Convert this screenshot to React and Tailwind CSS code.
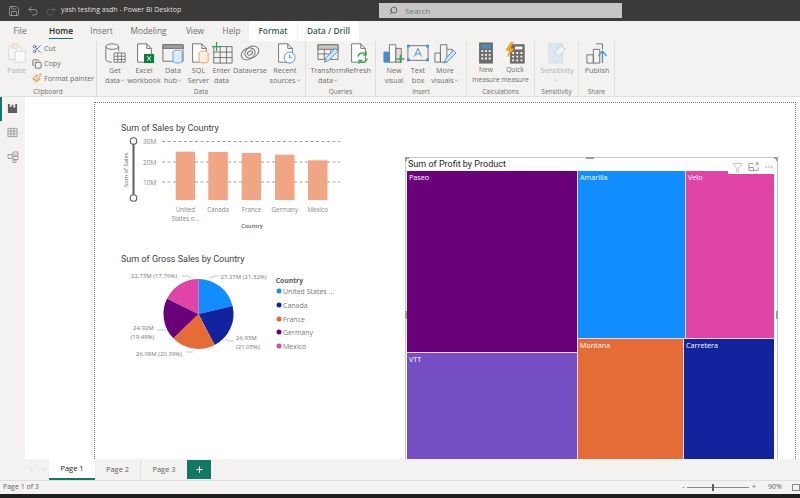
import { Copy, MoreHorizontal, Filter, Paintbrush, Scissors, Search, Save, Undo2, Redo2, ChevronDown, ChevronLeft, ChevronRight, Plus } from 'lucide-react';

const ui = { fontFamily: '"Open Sans", "Noto Sans", sans-serif' };
const din = { fontFamily: 'Roboto, sans-serif' };

const Svg = ({ children }) => (
  <svg width="22" height="22" viewBox="0 0 24 24" fill="none" stroke="#6f6d6b" strokeWidth="1">{children}</svg>
);

const Doc = () => <path d="M5 2h10l5 5v15H5z M15 2v5h5" fill="#fff" />;

const icons = {
  paste: (
    <Svg>
      <path d="M3 5h14v14H3z" stroke="#d8d6d3" fill="#f8f7f6" />
      <path d="M7 2h6v5H7z" stroke="#e8d5c0" fill="#f3e8dc" />
      <path d="M10 10h11v12H10z" stroke="#d8d6d3" fill="#fbfaf9" />
    </Svg>
  ),
  get: (
    <Svg>
      <ellipse cx="9" cy="5" rx="7" ry="3" />
      <path d="M2 5v14c0 2 4 3 7 3 M16 5v5" />
      <path d="M11 12h12v10H11z M11 15.500h12 M11 19h12 M15 12v10 M19 12v10" fill="#fff" />
    </Svg>
  ),
  excel: (
    <Svg>
      <Doc />
      <rect x="12" y="13" width="11" height="10" fill="#107c41" stroke="none" />
      <path d="M15.500 15.500l4 5 M19.500 15.500l-4 5" stroke="#fff" />
    </Svg>
  ),
  hub: (
    <Svg>
      <path d="M1 3h22v18H1z" />
      <path d="M1 3h22v4H1z" fill="#a19f9d" />
      <ellipse cx="17" cy="11" rx="5" ry="2" fill="#fff" stroke="#4f9bd9" />
      <path d="M12 11v10c0 2.500 10 2.500 10 0V11" fill="#dcebf8" stroke="#4f9bd9" />
    </Svg>
  ),
  sql: (
    <Svg>
      <Doc />
      <ellipse cx="17" cy="12" rx="5" ry="2" fill="#fff" stroke="#e3a35a" />
      <path d="M12 12v9c0 2.500 10 2.500 10 0v-9" fill="#fbeedd" stroke="#e3a35a" />
    </Svg>
  ),
  enter: (
    <Svg>
      <path d="M3 5h20v18H3z M3 11h20 M3 17h20 M10 5v18 M17 5v18" />
      <path d="M6 0v10 M1 5h10" stroke="#2f9e5b" strokeWidth="1.300" />
    </Svg>
  ),
  dataverse: (
    <Svg>
      <ellipse cx="10" cy="13" rx="8" ry="6" transform="rotate(-30 10 13)" />
      <ellipse cx="14" cy="11" rx="8" ry="6" transform="rotate(-30 14 11)" />
      <ellipse cx="12" cy="12" rx="3" ry="2" transform="rotate(-30 12 12)" />
    </Svg>
  ),
  recent: (
    <Svg>
      <Doc />
      <circle cx="17" cy="17" r="6" fill="#fff" stroke="#3f8fd2" />
      <path d="M17 13.500V17h3" stroke="#3f8fd2" />
    </Svg>
  ),
  transform: (
    <Svg>
      <path d="M1 3h22v16H1z M1 13h16 M8 3v16 M15 3v16" />
      <path d="M1 3h22v5H1z" fill="#c8c6c4" />
      <path d="M8 22l2-5 10-10 3 3-10 10z" fill="#cfe4f7" stroke="#3f8fd2" />
    </Svg>
  ),
  refresh: (
    <Svg>
      <Doc />
      <path d="M12 16a5 5 0 0 1 9-2 M22 18a5 5 0 0 1-9 2" stroke="#3ba55d" strokeWidth="1.500" />
      <path d="M21 10v4h-4 M13 24v-4h4" stroke="#3ba55d" strokeWidth="1.200" />
    </Svg>
  ),
  newVisual: (
    <Svg>
      <path d="M1 11h6v11H1z" fill="#3f8fd2" stroke="#3f8fd2" />
      <path d="M7 3h7v19H7z" fill="#fff" />
      <path d="M14 7h6v15h-6z" fill="#e1dfdd" />
      <path d="M19 14v9 M14.500 18.500h9" stroke="#3ba55d" strokeWidth="1.500" />
    </Svg>
  ),
  textBox: (
    <Svg>
      <path d="M1 4h22v16H1z" />
      <path d="M8 16l4-9 4 9 M9.500 13h5" stroke="#3f8fd2" />
      <path d="M0 3h3v3H0z M21 3h3v3h-3z M0 18h3v3H0z M21 18h3v3h-3z" fill="#3f8fd2" stroke="none" />
    </Svg>
  ),
  moreVisuals: (
    <Svg>
      <path d="M1 12h6v10H1z M7 3h7v19H7z M14 8h6v8" />
      <path d="M11 23l2-5 8-9 3 3-9 9z" fill="#cfe4f7" stroke="#3f8fd2" />
    </Svg>
  ),
  measure: (
    <Svg>
      <rect x="5" y="1" width="14" height="22" fill="#6f6d6b" />
      <rect x="7" y="3" width="10" height="4" fill="#3f8fd2" stroke="none" />
      <path d="M7 10h2 M11 10h2 M15 10h2 M7 14h2 M11 14h2 M15 14h2 M7 18h2 M11 18h2 M15 18h2" stroke="#fff" strokeWidth="2" />
    </Svg>
  ),
  quick: (
    <Svg>
      <rect x="7" y="3" width="15" height="20" fill="#6f6d6b" />
      <rect x="12" y="5" width="8" height="3" fill="#fff" stroke="none" />
      <path d="M9 12h2 M13.500 12h2 M18 12h2 M9 16h2 M13.500 16h2 M18 16h2 M9 20h2 M13.500 20h2 M18 20h2" stroke="#fff" strokeWidth="2" />
      <path d="M8 0L2 9h4l-2 7 7-9H7l3-7z" fill="#f2a71b" stroke="#e08a00" strokeWidth="0.6" />
    </Svg>
  ),
  sensitivity: (
    <Svg>
      <path d="M3 2h15v21H3z" fill="#dbe8f3" stroke="#d5dee6" />
      <path d="M9 12l7-8 5 4-7 8z" fill="#eef3f7" stroke="#c8c6c4" />
    </Svg>
  ),
  publish: (
    <Svg>
      <path d="M1 14h7v9H1z M8 8h7v15H8z M11 2h7v6" />
      <path d="M18 23V11 M13.500 15l4.500-5 4.500 5" stroke="#3f8fd2" strokeWidth="1.300" />
    </Svg>
  ),
};

const Btn = ({ w, icon, lines, arrow, dim, tight }) => (
  <div className={`${w} flex flex-col items-center shrink-0 ${dim ? 'text-[#b3b0ad]' : 'text-[#6f6d6b]'}`}>
    <div className="h-[25px] flex items-end">{icons[icon]}</div>
    <div className={`${tight ? 'text-[6.7px]' : 'text-[7.2px]'} leading-[10px] text-center whitespace-nowrap mt-px`}>
      <div>{lines[0]}</div>
      <div className="flex items-center justify-center h-[10px]">
        {lines[1]}
        {arrow && <ChevronDown size={5} strokeWidth={2.5} />}
      </div>
    </div>
  </div>
);

const Group = ({ w, pl, label, children }) => (
  <div className={`${w} shrink-0 flex flex-col h-full border-r border-[#e1dfdd]`}>
    <div className={`flex flex-1 min-h-0 ${pl}`}>{children}</div>
    <div className="text-[6.5px] leading-[13px] text-[#6f6d6b] text-center h-[11px]">{label}</div>
  </div>
);

const Ribbon = () => (
  <div className="h-[56px] bg-[#f3f2f1] border-b border-[#e1dfdd] flex shrink-0">
    <Group w="w-[97px]" pl="" label="Clipboard">
      <Btn w="w-[32px] pl-px" icon="paste" lines={['Paste', '']} dim />
      <div className="flex flex-col text-[7.2px] text-[#6f6d6b] pt-[1px] gap-[1px]">
        <div className="flex items-center gap-[2px] h-[14px]"><Scissors size={10} color="#3f6f9f" />Cut</div>
        <div className="flex items-center gap-[2px] h-[14px]"><Copy size={10} color="#605e5c" />Copy</div>
        <div className="flex items-center gap-[2px] h-[14px] whitespace-nowrap"><Paintbrush size={10} color="#d98324" />Format painter</div>
      </div>
    </Group>
    <Group w="w-[209px]" pl="pl-[4px]" label="Data">
      <Btn w="w-[28px]" icon="get" lines={['Get', 'data']} arrow />
      <Btn w="w-[30px]" icon="excel" lines={['Excel', 'workbook']} />
      <Btn w="w-[28px]" icon="hub" lines={['Data', 'hub']} arrow />
      <Btn w="w-[23px]" icon="sql" lines={['SQL', 'Server']} />
      <Btn w="w-[23px]" icon="enter" lines={['Enter', 'data']} />
      <Btn w="w-[34px]" icon="dataverse" lines={['Dataverse', '']} />
      <Btn w="w-[36px]" icon="recent" lines={['Recent', 'sources']} arrow />
    </Group>
    <Group w="w-[70px]" pl="pl-[6px]" label="Queries">
      <Btn w="w-[32px]" icon="transform" lines={['Transform', 'data']} arrow />
      <Btn w="w-[28px]" icon="refresh" lines={['Refresh', '']} />
    </Group>
    <Group w="w-[91px]" pl="pl-[7px]" label="Insert">
      <Btn w="w-[22px]" icon="newVisual" lines={['New', 'visual']} />
      <Btn w="w-[26px]" icon="textBox" lines={['Text', 'box']} />
      <Btn w="w-[28px]" icon="moreVisuals" lines={['More', 'visuals']} arrow />
    </Group>
    <Group w="w-[68px]" pl="pl-[4px]" label="Calculations">
      <Btn w="w-[30px]" icon="measure" lines={['New', 'measure']} tight />
      <Btn w="w-[28px]" icon="quick" lines={['Quick', 'measure']} tight />
    </Group>
    <Group w="w-[44px]" pl="" label="Sensitivity">
      <Btn w="w-[44px]" icon="sensitivity" lines={['Sensitivity', '']} arrow dim />
    </Group>
    <Group w="w-[36px]" pl="" label="Share">
      <Btn w="w-[36px]" icon="publish" lines={['Publish', '']} />
    </Group>
  </div>
);

const Tab = ({ w, children, on, ctx }) => (
  <div className={`${w} h-full flex items-center justify-center shrink-0 text-[8.3px] whitespace-nowrap relative ${ctx ? 'bg-white font-semibold text-[#3b5a55]' : on ? 'font-semibold text-[#252423]' : 'text-[#6f6d6b]'}`}>
    {children}
    {on && <div className="absolute bottom-[2px] left-[9px] right-[9px] h-[1.5px] bg-[#117865]" />}
  </div>
);

const BarChart = () => {
  const bars = [
    { x: 54.7, y: 16.7, name: ['United', 'States o...'] },
    { x: 87.3, y: 17, name: ['Canada'] },
    { x: 120.7, y: 18, name: ['France'] },
    { x: 154, y: 19.7, name: ['Germany'] },
    { x: 187, y: 25.3, name: ['Mexico'] },
  ];
  return (
    <svg width="225" height="100" viewBox="0 0 225 100" className="block" style={ui}>
      {[6.5, 27, 47].map((y) => (
        <line key={y} x1="41" x2="219" y1={y} y2={y} stroke="#8a8886" strokeWidth="0.8" strokeDasharray="3 2.500" />
      ))}
      {[['30M', 9], ['20M', 29.5], ['10M', 49.5]].map(([t, y]) => (
        <text key={t} x="22" y={y} fontSize="6.6" fill="#8a8886">{t}</text>
      ))}
      {bars.map((b) => (
        <g key={b.x}>
          <rect x={b.x} y={b.y} width="19.500" height={65 - b.y} fill="#f0a585" />
          {b.name.map((n, i) => (
            <text key={n} x={b.x + 9.75} y={76.5 + i * 9} textAnchor="middle" fontSize="6.200" fill="#8a8886">{n}</text>
          ))}
        </g>
      ))}
      <text x="131" y="93" textAnchor="middle" fontSize="5.600" fontWeight="600" fill="#605e5c">Country</text>
      <line x1="12.500" x2="12.500" y1="6" y2="63" stroke="#605e5c" strokeWidth="2" />
      <circle cx="12.500" cy="6" r="3.300" fill="#fff" stroke="#605e5c" strokeWidth="1.100" />
      <circle cx="12.500" cy="63" r="3.300" fill="#fff" stroke="#605e5c" strokeWidth="1.100" />
      <text transform="translate(6.500,52) rotate(-90)" fontSize="5.800" fill="#605e5c">Sum of Sales</text>
    </svg>
  );
};

const slices = [
  { pct: 21.32, color: '#118dff' },
  { pct: 21.05, color: '#12239e' },
  { pct: 20.39, color: '#e66c37' },
  { pct: 19.48, color: '#6b007b' },
  { pct: 17.76, color: '#e044a7' },
];

const legendY = [25, 39, 53, 66, 80];

const Pie = () => {
  let acc = 0;
  const cx = 77.5;
  const cy = 48;
  const r = 35;
  const pt = (p) => {
    const a = (p / 100) * 2 * Math.PI;
    return `${(cx + r * Math.sin(a)).toFixed(2)} ${(cy - r * Math.cos(a)).toFixed(2)}`;
  };
  return (
    <svg width="225" height="100" viewBox="0 0 225 100" className="block" style={ui}>
      {slices.map((s) => {
        const d = `M${cx} ${cy}L${pt(acc)}A${r} ${r} 0 0 1 ${pt(acc + s.pct)}Z`;
        acc += s.pct;
        return <path key={s.color} d={d} fill={s.color} />;
      })}
      <path d="M89 12l5-2h4 M61 10h6l3 2 M36 64h8 M104 73l4 2h5 M65 86h7" stroke="#a19f9d" strokeWidth="0.6" fill="none" />
      <g fontSize="6" fill="#777">
        <text x="99.500" y="12.500">27.27M (21.32%)</text>
        <text x="10" y="11.500">22.73M (17.76%)</text>
        <text x="12" y="63.500">24.92M</text>
        <text x="9.500" y="72.500">(19.48%)</text>
        <text x="115" y="73.500">26.93M</text>
        <text x="115" y="82.500">(21.05%)</text>
        <text x="15" y="89.500">26.08M (20.39%)</text>
      </g>
      <text x="154.700" y="16.500" fontSize="6.800" fontWeight="700" fill="#605e5c">Country</text>
      {['United States ...', 'Canada', 'France', 'Germany', 'Mexico'].map((n, i) => (
        <g key={n}>
          <circle cx="158" cy={legendY[i]} r="2.500" fill={slices[i].color} />
          <text x="162" y={legendY[i] + 2.500} fontSize="7" fill="#777">{n}</text>
        </g>
      ))}
    </svg>
  );
};

const Cell = ({ className, label }) => (
  <div className={`${className} text-white text-[7.2px] leading-none pl-[2px] pt-[3px]`} style={ui}>{label}</div>
);

const Treemap = () => (
  <div className="w-[373px] h-[320px] shrink-0 relative border-t border-r border-l border-[#c8c6c4] pl-[1px] pr-[3px]">
    <div className="h-[13px] text-[9px] leading-[13px] text-[#252423] pl-[1px]" style={din}>Sum of Profit by Product</div>
    <div className="flex gap-[1px] h-[288px] bg-[#e8d9e8]">
      <div className="w-[170px] flex flex-col gap-[1px]">
        <Cell className="h-[181px] bg-[#6b007b]" label="Paseo" />
        <Cell className="flex-1 bg-[#744ec2]" label="VTT" />
      </div>
      <div className="flex-1 flex flex-col gap-[1px]">
        <div className="h-[167px] flex gap-[1px]">
          <Cell className="w-[107px] bg-[#118dff]" label="Amarilla" />
          <Cell className="flex-1 bg-[#e044a7]" label="Velo" />
        </div>
        <div className="flex-1 flex gap-[1px]">
          <Cell className="w-[105px] bg-[#e66c37]" label="Montana" />
          <Cell className="flex-1 bg-[#12239e]" label="Carretera" />
        </div>
      </div>
    </div>
    {/* hover header */}
    <div className="absolute right-[0px] top-[2px] h-[14px] w-[49px] bg-white flex items-center justify-around text-[#8a8886] px-[1px]">
      <Filter size={11} strokeWidth={1.1} />
      <svg width="11" height="10" viewBox="0 0 12 11" fill="none" stroke="currentColor" strokeWidth="0.9">
        <path d="M6 1.500H1v8h10V6 M1 6h5v3.500 M8 4l3-3 M8.500 1H11v2.500" />
      </svg>
      <MoreHorizontal size={10} strokeWidth={1.2} />
    </div>
    <div className="absolute top-[-1px] left-[180px] w-[8px] h-[2px] bg-[#a19f9d]" />
    <div className="absolute left-[-1px] top-[153px] w-[2px] h-[8px] bg-[#a19f9d]" />
    <div className="absolute right-[-1px] top-[153px] w-[2px] h-[8px] bg-[#a19f9d]" />
    <div className="absolute left-[-1px] top-[-1px] w-[4px] h-[4px] border-t-2 border-l-2 border-[#a19f9d]" />
    <div className="absolute right-[-1px] top-[-1px] w-[4px] h-[4px] border-t-2 border-r-2 border-[#a19f9d]" />
  </div>
);

const App = () => (
  <div className="w-[800px] h-[498px] flex flex-col overflow-hidden bg-white" style={ui}>
    {/* title bar */}
    <div className="h-[21px] bg-[#3b3a39] flex items-center shrink-0 text-[#d2d0ce]">
      <div className="w-[24px] pl-[8px]"><Save size={12} strokeWidth={1.1} /></div>
      <div className="w-[18px] pl-[3px]"><Undo2 size={12} strokeWidth={1.1} /></div>
      <div className="w-[19px] pl-[3px] text-[#797775]"><Redo2 size={12} strokeWidth={1.1} /></div>
      <div className="w-[318px] text-[7px] text-[#e1dfdd] whitespace-nowrap">yash testing asdh - Power BI Desktop</div>
      <div className="w-[243px] h-[15px] bg-[#c8c6c4] flex items-center pl-[10px] gap-[7px]">
        <Search size={9} color="#484644" className="-scale-x-100" />
        <span className="text-[8px] text-[#5f7f75]">Search</span>
      </div>
    </div>
    {/* tabs */}
    <div className="h-[20px] bg-[#f3f2f1] flex shrink-0">
      <Tab w="w-[40px]">File</Tab>
      <Tab w="w-[42px]" on>Home</Tab>
      <Tab w="w-[39px]">Insert</Tab>
      <Tab w="w-[55px]">Modeling</Tab>
      <Tab w="w-[38px]">View</Tab>
      <Tab w="w-[35px]">Help</Tab>
      <Tab w="w-[48px]" ctx>Format</Tab>
      <div className="w-px" />
      <Tab w="w-[61px]" ctx>Data / Drill</Tab>
    </div>
    <Ribbon />
    {/* main */}
    <div className="flex-1 min-h-0 flex">
      <div className="w-[25px] bg-[#f3f2f1] flex flex-col items-center shrink-0 relative pt-[6px] gap-[13px]">
        <div className="absolute left-0 top-0 w-[1.5px] h-[24px] bg-[#117865]" />
        <svg width="11" height="11" viewBox="0 0 12 12" fill="#605e5c"><path d="M1 1h2v3h2V2h2v3h2V1h2v10H1z" /></svg>
        <svg width="11" height="11" viewBox="0 0 12 12" fill="none" stroke="#8a8886" strokeWidth="0.8"><path d="M1 1.500h10v9H1z M1 4.500h10 M1 7.500h10 M4.300 1.500v9 M7.600 1.500v9" /></svg>
        <svg width="12" height="12" viewBox="0 0 12 12" fill="none" stroke="#8a8886" strokeWidth="0.8"><path d="M1 3.500h4v4H1z M6 1h5v3H6z M6 5.500h5v3H6z M6 9h3v2.500H6z" /></svg>
      </div>
      <div className="flex-1 min-w-0 flex flex-col">
        <div className="flex-1 min-h-0 overflow-hidden pl-[69px] pr-[4px] pt-[5px]">
          <div className="h-full border-l border-t border-r border-dotted border-[#797775] flex overflow-hidden">
            <div className="w-[310px] shrink-0 pl-[26px] pt-[19px]">
              <div className="h-[13px] text-[9px] leading-[13px] text-[#403f3e]" style={din}>Sum of Sales by Country</div>
              <BarChart />
              <div className="h-[13px] mt-[18px] text-[9px] leading-[13px] text-[#403f3e]" style={din}>Sum of Gross Sales by Country</div>
              <Pie />
            </div>
            <div className="pt-[54px]"><Treemap /></div>
          </div>
        </div>
        {/* page tabs */}
        <div className="h-[21px] bg-[#f3f2f1] flex items-stretch shrink-0 text-[7.5px] text-[#605e5c]">
          <div className="w-[24px] flex items-center justify-around text-[#c8c6c4]">
            <ChevronLeft size={7} /><ChevronRight size={7} />
          </div>
          <div className="w-[46px] bg-white border-b-2 border-[#117865] flex items-center justify-center text-[#252423]">Page 1</div>
          <div className="w-[46px] border-r border-[#e1dfdd] flex items-center justify-center">Page 2</div>
          <div className="w-[46px] flex items-center justify-center">Page 3</div>
          <div className="w-[24px] h-[19px] mt-[1px] bg-[#117865] flex items-center justify-center">
            <Plus size={9} color="#fff" strokeWidth={3} />
          </div>
        </div>
      </div>
    </div>
    {/* status */}
    <div className="h-[14px] bg-[#f3f2f1] border-t border-[#e1dfdd] flex items-center shrink-0 text-[7px] text-[#605e5c] pl-[3px]">
      <span className="w-[678px]">Page 1 of 3</span>
      <span className="w-[5px] text-center">-</span>
      <div className="w-[62px] h-px bg-[#8a8886] relative mx-[1px]">
        <div className="absolute left-[25px] top-[-3px] w-[2px] h-[7px] bg-[#605e5c]" />
      </div>
      <span className="w-[8px] text-center">+</span>
      <span className="ml-[10px]">90%</span>
      <div className="ml-[10px] w-[8px] h-[7px] border border-[#8a8886]" />
    </div>
    <div className="h-[4px] bg-[#201f1e] shrink-0" />
  </div>
);

export default App;
